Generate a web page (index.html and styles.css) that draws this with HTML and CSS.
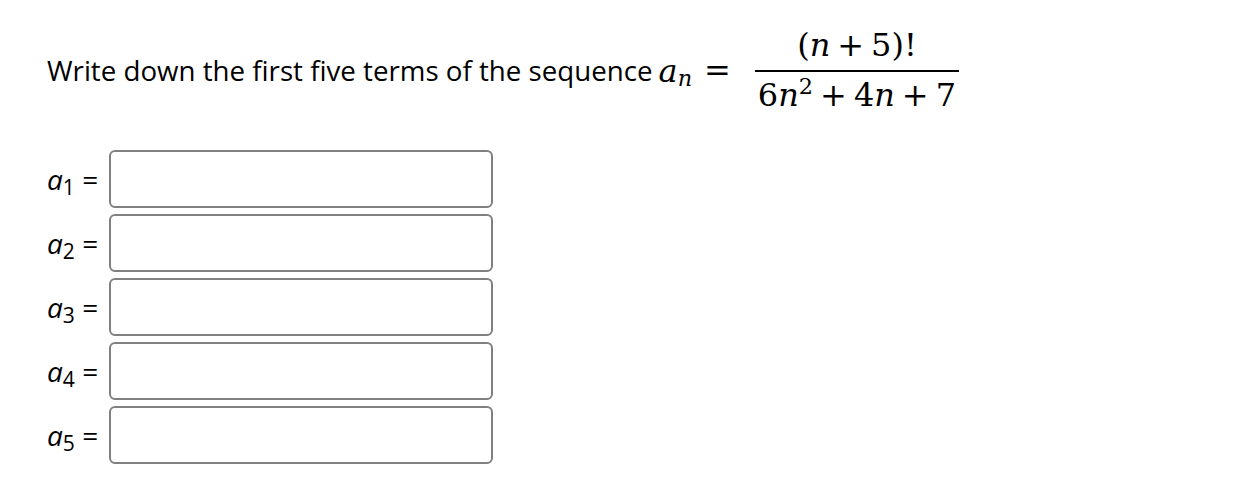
FILE: index.html
```html
<!DOCTYPE html>
<html>
<head>
<meta charset="utf-8">
<link rel="stylesheet" href="styles.css">
</head>
<body>
<div class="page">
  <div class="question"><span class="lead">Write down the first five terms of the sequence</span><span class="math"><span class="var"><span class="mi">a</span><sub class="msub">n</sub></span><span class="rel">=</span><span class="frac"><span class="num">(<span class="mi">n</span><span class="op">+</span>5)!</span><span class="den">6<span class="mi">n</span><sup class="msup">2</sup><span class="op">+</span>4<span class="mi">n</span><span class="op">+</span>7</span></span></span></div>
  <div class="answers">
    <div class="row"><span class="label"><i>a</i><sub>1</sub> =</span><div class="box"></div></div>
    <div class="row"><span class="label"><i>a</i><sub>2</sub> =</span><div class="box"></div></div>
    <div class="row"><span class="label"><i>a</i><sub>3</sub> =</span><div class="box"></div></div>
    <div class="row"><span class="label"><i>a</i><sub>4</sub> =</span><div class="box"></div></div>
    <div class="row"><span class="label"><i>a</i><sub>5</sub> =</span><div class="box"></div></div>
  </div>
</div>
</body>
</html>
```
FILE: styles.css
```css
html, body {
  margin: 0;
  padding: 0;
  background: #ffffff;
}
body {
  font-family: "Open Sans", "Liberation Sans", sans-serif;
  color: #000;
}
.page {
  padding: 0 0 0 47px;
}
.question {
  margin: 0 0 10px 0;
  font-size: 27.7px;
  line-height: 36px;
  height: 140px;
  white-space: nowrap;
  display: flex;
  align-items: center;
}
.lead {
  display: inline-block;
}
.math {
  font-family: "DejaVu Serif", "Liberation Serif", serif;
  font-size: 32px;
  display: inline-flex;
  align-items: center;
  margin-left: 6px;
}
.var {
  line-height: 36px;
  margin-top: 2px;
}
.mi {
  font-style: italic;
}
.msub {
  font-size: 0.7em;
  font-style: italic;
  vertical-align: -0.2em;
  line-height: 0;
}
.msup {
  font-size: 0.7em;
  vertical-align: 0.55em;
  line-height: 0;
}
.rel {
  margin: 0 24px 0 12px;
}
.op {
  margin: 0 7px;
}
.frac {
  display: inline-flex;
  flex-direction: column;
  align-items: center;
}
.num {
  line-height: 40px;
  padding: 0 3px 5px;
}
.den {
  border-top: 2px solid #000;
  line-height: 40px;
  padding: 3px 3px 0;
}
.answers {
  display: flex;
  flex-direction: column;
  gap: 6px;
}
.row {
  display: flex;
  align-items: center;
}
.label {
  width: 62px;
  font-size: 28px;
  line-height: 30px;
  white-space: nowrap;
}
.label i {
  font-style: italic;
}
.label sub {
  font-size: 0.75em;
  vertical-align: -0.25em;
  line-height: 0;
}
.box {
  width: 380px;
  height: 54px;
  border: 2px solid #808080;
  border-radius: 6px;
  background: #fff;
}
```
